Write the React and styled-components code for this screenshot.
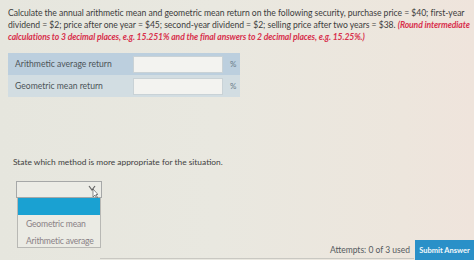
import React from "react";
import styled, { createGlobalStyle } from "styled-components";

const Global = createGlobalStyle`
  html, body { margin: 0; padding: 0; overflow: hidden; }
  body {
    width: 474px; height: 260px;
    background: linear-gradient(90deg, #e6e6de 0%, #e9e8e0 45%, #ede6dd 85%, #efe4dc 100%);
    font-family: Lato, "Open Sans", sans-serif;
  }
`;

const Page = styled.div`
  position: relative;
  width: 474px;
  height: 260px;
  display: flex;
  flex-direction: column;
  box-sizing: border-box;
  padding: 7px 0 0 8px;
`;

const Question = styled.p`
  margin: 0;
  font-size: 8.6px;
  line-height: 12px;
  color: #3c3c3c;
  white-space: nowrap;
  letter-spacing: -0.04px;
`;

const Red = styled.span`
  color: #d8304c;
  font-weight: 700;
  font-style: italic;
  letter-spacing: -0.1px;
`;

const Table = styled.div`
  margin-top: 10px;
  width: 232px;
  display: flex;
  flex-direction: column;
`;

const Row = styled.div`
  display: grid;
  grid-template-columns: 125px 90px 17px;
  align-items: center;
  height: 22px;
  background: ${(p) => (p.$shade ? "#bccfde" : "#d2dde2")};
`;

const Label = styled.span`
  padding-left: 7px;
  font-size: 8.6px;
  color: #4c5458;
`;

const Input = styled.div`
  height: 15px;
  background: #f3f3f0;
  border: 1px solid #c9d2d6;
`;

const Pct = styled.span`
  font-size: 8px;
  color: #6a7c88;
  padding-left: 7px;
`;

const Prompt = styled.p`
  margin: 59px 0 0 5px;
  font-size: 8.4px;
  line-height: 12px;
  color: #404040;
`;

const SelectWrap = styled.div`
  position: relative;
  margin: 13px 0 0 8px;
  width: 86px;
`;

const Select = styled.div`
  height: 15px;
  border: 1px solid #a6a8a8;
  background: #ecece6;
  position: relative;
`;

const Chevron = styled.svg`
  position: absolute;
  right: 3px;
  top: 3px;
`;

const Menu = styled.div`
  position: absolute;
  left: 1px;
  top: 17px;
  width: 84px;
  height: 50px;
  background: #ebebe4;
  border: 1px solid #b8b8b4;
  border-top: none;
  box-sizing: border-box;
`;

const Highlight = styled.div`
  height: 17px;
  background: #1aa1d2;
`;

const Option = styled.div`
  height: 17px;
  display: flex;
  align-items: center;
  padding-left: 8px;
  font-size: 8.6px;
  letter-spacing: -0.2px;
  color: #8a8286;
`;

const Footer = styled.div`
  position: absolute;
  right: 0;
  bottom: 0;
  display: flex;
  align-items: center;
  gap: 5px;
`;

const Attempts = styled.span`
  font-size: 8.5px;
  color: #555a60;
`;

const Submit = styled.button`
  width: 59px;
  height: 20px;
  border: none;
  background: #2a90c8;
  color: #f4f8fb;
  font-family: Lato, sans-serif;
  font-weight: 700;
  font-size: 7.5px;
  padding: 0;
`;

const BottomLine = styled.div`
  position: absolute;
  left: 100px;
  right: 60px;
  bottom: 1px;
  height: 1px;
  background: #c9c8c2;
`;

export default function App() {
  return (
    <>
      <Global />
      <Page>
        <Question>
          Calculate the annual arithmetic mean and geometric mean return on the following security, purchase price = $40; first-year
          <br />
          dividend = $2; price after one year = $45; second-year dividend = $2; selling price after two years = $38.{" "}
          <Red>(Round intermediate</Red>
          <br />
          <Red>calculations to 3 decimal places, e.g. 15.251% and the final answers to 2 decimal places, e.g. 15.25%.)</Red>
        </Question>
        <Table>
          <Row $shade>
            <Label>Arithmetic average return</Label>
            <Input />
            <Pct>%</Pct>
          </Row>
          <Row>
            <Label>Geometric mean return</Label>
            <Input />
            <Pct>%</Pct>
          </Row>
        </Table>
        <Prompt>State which method is more appropriate for the situation.</Prompt>
        <SelectWrap>
          <Select>
            <Chevron width="10" height="14" viewBox="0 0 10 14">
              <path d="M1 1 L4 5 L7 1" fill="none" stroke="#666" strokeWidth="1.2" />
              <path d="M5 4 L5 12 L7 10 L8.5 13 L9.5 12.5 L8 9.5 L10 9.5 Z" fill="#fff" stroke="#444" strokeWidth="0.6" />
            </Chevron>
          </Select>
          <Menu>
            <Highlight />
            <Option>Geometric mean</Option>
            <Option>Arithmetic average</Option>
          </Menu>
        </SelectWrap>
        <BottomLine />
        <Footer>
          <Attempts>Attempts: 0 of 3 used</Attempts>
          <Submit>Submit Answer</Submit>
        </Footer>
      </Page>
    </>
  );
}
